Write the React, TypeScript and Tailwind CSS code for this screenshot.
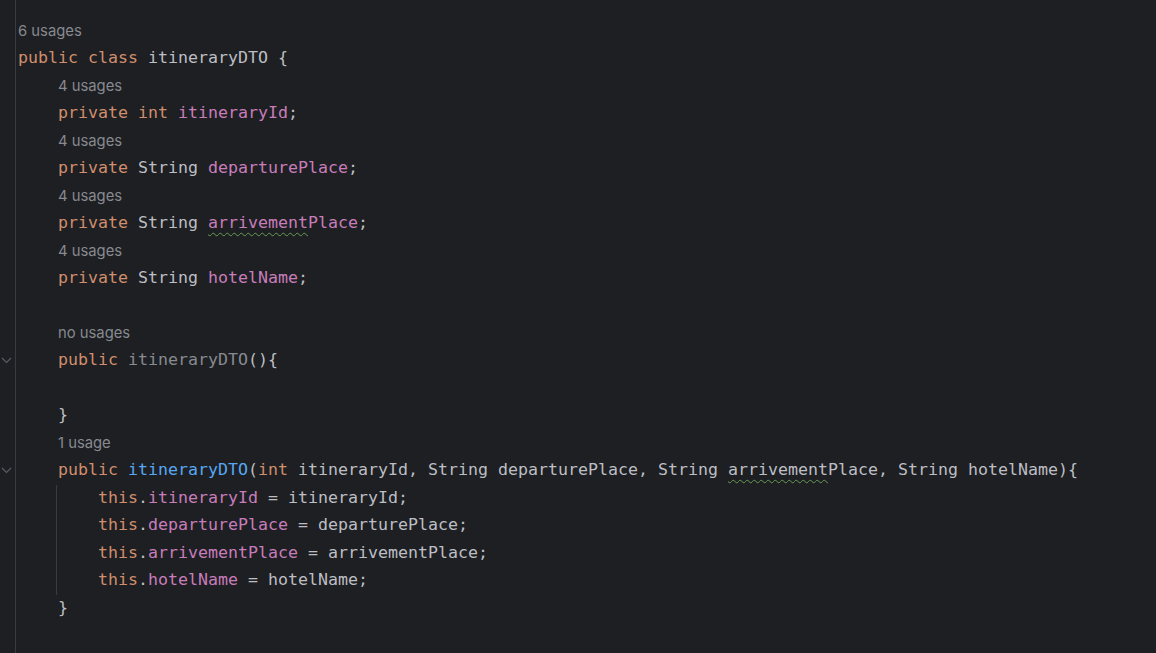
import React from 'react'

const K = ({ children }: { children: React.ReactNode }) => <span className="text-[#cf8e6d]">{children}</span>
const F = ({ children }: { children: React.ReactNode }) => <span className="text-[#c77dbb]">{children}</span>
const M = ({ children }: { children: React.ReactNode }) => <span className="text-[#56a8f5]">{children}</span>
const Dim = ({ children }: { children: React.ReactNode }) => <span className="text-[#868a91]">{children}</span>
const Typo = ({ children }: { children: React.ReactNode }) => (
  <span className="underline decoration-wavy decoration-[#6a9a55] decoration-1 underline-offset-[4px]">{children}</span>
)

function Hint({ text, indent = 0 }: { text: string; indent?: number }) {
  return (
    <div
      className="h-[27.5px] flex items-center text-[14.8px] text-[#868a91] whitespace-pre"
      style={{ paddingLeft: indent * 10, fontFamily: 'Inter, "Noto Sans", sans-serif' }}
    >
      {text}
    </div>
  )
}

function Line({ children, indent = 0 }: { children?: React.ReactNode; indent?: number }) {
  return (
    <div className="h-[27.5px] flex items-center whitespace-pre" style={{ paddingLeft: indent * 10 }}>
      {children}
    </div>
  )
}

function Fold() {
  return (
    <svg width="11" height="7" viewBox="0 0 11 7" fill="none" className="block">
      <path d="M1 1 L5.5 5.5 L10 1" stroke="#5a5d63" strokeWidth="1.1" />
    </svg>
  )
}

export default function App() {
  const rows = 22
  return (
    <div
      className="w-full h-[653px] bg-[#1e1f22] flex overflow-hidden text-[#bcbec4] text-[16.63px]"
      style={{ fontFamily: '"DejaVu Sans Mono", "Liberation Mono", monospace' }}
    >
      {/* gutter */}
      <div className="w-[16px] shrink-0 border-r border-[#393b40] pt-[17px] flex flex-col">
        {Array.from({ length: rows }).map((_, i) => (
          <div key={i} className="h-[27.5px] flex items-center pl-[1px]">
            {(i === 12 || i === 16) && <Fold />}
          </div>
        ))}
      </div>

      {/* code */}
      <div className="flex-1 pt-[17px] pl-[2px]">
        <Hint text="6 usages" />
        <Line>
          <K>public class </K>itineraryDTO {'{'}
        </Line>
        <Hint text="4 usages" indent={4} />
        <Line indent={4}>
          <K>private int </K>
          <F>itineraryId</F>;
        </Line>
        <Hint text="4 usages" indent={4} />
        <Line indent={4}>
          <K>private </K>String <F>departurePlace</F>;
        </Line>
        <Hint text="4 usages" indent={4} />
        <Line indent={4}>
          <K>private </K>String{' '}
          <F>
            <Typo>arrivement</Typo>Place
          </F>
          ;
        </Line>
        <Hint text="4 usages" indent={4} />
        <Line indent={4}>
          <K>private </K>String <F>hotelName</F>;
        </Line>
        <Line />
        <Hint text="no usages" indent={4} />
        <Line indent={4}>
          <K>public </K>
          <Dim>itineraryDTO</Dim>(){'{'}
        </Line>
        <Line />
        <Line indent={4}>{'}'}</Line>
        <Hint text="1 usage" indent={4} />
        <Line indent={4}>
          <K>public </K>
          <M>itineraryDTO</M>(<K>int </K>itineraryId, String departurePlace, String <Typo>arrivement</Typo>Place, String
          hotelName){'{'}
        </Line>
        <div className="ml-[38px] border-l border-[#393b40] pl-[41px]">
          <Line>
            <K>this</K>.<F>itineraryId</F> = itineraryId;
          </Line>
          <Line>
            <K>this</K>.<F>departurePlace</F> = departurePlace;
          </Line>
          <Line>
            <K>this</K>.<F>arrivementPlace</F> = arrivementPlace;
          </Line>
          <Line>
            <K>this</K>.<F>hotelName</F> = hotelName;
          </Line>
        </div>
        <Line indent={4}>{'}'}</Line>
      </div>
    </div>
  )
}
